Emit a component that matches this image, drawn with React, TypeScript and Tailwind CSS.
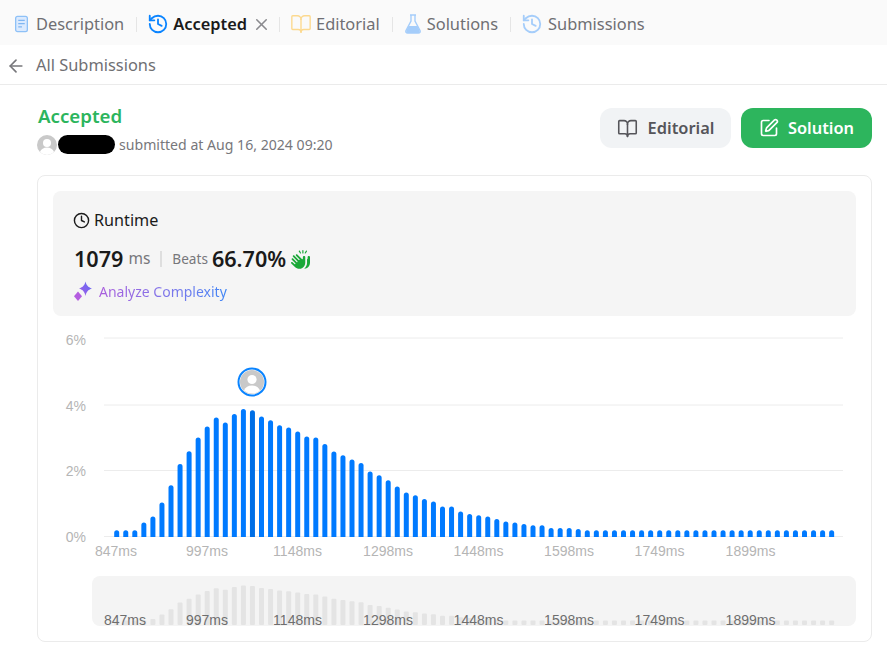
import React from "react";
import { ArrowLeft, BookOpen, Clock, History, SquarePen, X } from "lucide-react";
import { FaHandsClapping } from "react-icons/fa6";

const ui = "font-['Noto_Sans','Open_Sans',sans-serif]";

const head = [6,6,6,13.7,19.7,33.7,51,72.3,85,98.7,109.7,118.7,113.7,122.3,127.3,126,119.7,116,111,108.7,104.7,99.7,98.7,92.3,84.7,81,76.7,73.3,64.7,61,56,49.7,43.7,41,37.3,34.7,29.7,29.7,24.7,22.3,21,19.7,17.3,14.7,13.7,12.3,11,11,8.3,8.3,8.3,7.3];
const bars = [...head, ...Array(80 - head.length).fill(6)];
const labels = [["847ms",116],["997ms",207],["1148ms",297.5],["1298ms",388],["1448ms",478.5],["1598ms",569],["1749ms",659.5],["1899ms",750.5]] as const;

function Sep({ left = "ml-[12px]" }: { left?: string }) {
  return <span className={`${left} mr-[10px] h-[15px] w-px bg-[#e5e5e5]`} />;
}

function Avatar({ size }: { size: number }) {
  return (
    <svg width={size} height={size} viewBox="0 0 24 24" className="shrink-0">
      <circle cx="12" cy="12" r="12" fill="#c9c9c9" />
      <circle cx="12" cy="9.5" r="4.8" fill="#fff" />
      <path d="M3.5 20.5c1.4-3.6 4.6-5.4 8.5-5.4s7.100 1.800 8.500 5.400A12 12 0 0 1 12 24a12 12 0 0 1-8.500-3.500z" fill="#fff" />
    </svg>
  );
}

export default function App() {
  return (
    <div className={`${ui} h-[658px] w-[887px] overflow-hidden bg-white`}>
      <div className="flex h-[45px] items-center bg-[#fafafa] pt-[3px] pl-[15px] text-[16.4px] text-[#6f6f73]">
        <svg width="13" height="18" viewBox="0 0 14 18" className="mr-[8px]">
          <rect x="0.7" y="0.7" width="12.6" height="16.6" rx="2" fill="#dbeafe" stroke="#8ec1f7" strokeWidth="1.4" />
          <path d="M3.5 5h7M3.500 8.500h7M3.500 12h4" stroke="#7fb6f2" strokeWidth="1.3" />
        </svg>
        <span>Description</span>
        <Sep />
        <History size={22} strokeWidth={2} className="mr-[4px] text-[#0a84ff]" />
        <span className="font-semibold text-[#1a1a1a]">Accepted</span>
        <X size={19} className="ml-[5px] text-[#8a8a8e]" />
        <Sep left="ml-[8px]" />
        <BookOpen size={22} strokeWidth={1.5} className="mr-[4px] text-[#fcd98f]" />
        <span>Editorial</span>
        <Sep />
        <svg width="16" height="20" viewBox="0 0 16 20" className="mr-[6px] ml-[2px]">
          <path d="M5 1h6M6 1v6L1 16.500C.4 18 1.300 19 2.600 19h10.800c1.300 0 2.200-1 1.600-2.500L10 7V1" fill="none" stroke="#a5cdfa" strokeWidth="1.4" />
          <path d="M3.600 12h8.800l2.200 4.600c.5 1.200-.2 2.400-1.400 2.400H2.800c-1.200 0-1.900-1.200-1.400-2.400z" fill="#a5cdfa" />
        </svg>
        <span>Solutions</span>
        <Sep />
        <History size={22} strokeWidth={2} className="mr-[5px] text-[#a5cdfa]" />
        <span>Submissions</span>
      </div>

      <div className="flex h-[40px] items-center border-b border-[#ebebeb] pt-[2px] pl-[6px] text-[16.4px] text-[#6f6f73]">
        <ArrowLeft size={20} className="mr-[10px] text-[#77777b]" />
        <span>All Submissions</span>
      </div>

      <div className="px-[15px] pl-[37px]">
        <div className="flex h-[90px] items-start justify-between pt-[23px]">
          <div className="-mt-px">
            <div className="ml-px text-[18.7px] leading-[18px] font-semibold text-[#2cb55d]">Accepted</div>
            <div className="mt-[10px] flex h-[20px] items-center text-[14.1px] text-[#77777b]">
              <Avatar size={20} />
              <span className="mr-[4px] ml-px mb-[2px] h-[19px] w-[57px] rounded-full bg-black" />
              <span>submitted at Aug 16, 2024 09:20</span>
            </div>
          </div>
          <div className="flex gap-[10px] text-[16.4px] font-semibold">
            <button className="flex h-[40px] w-[131px] items-center justify-center gap-[10px] rounded-xl bg-[#f1f3f5] text-[#55555a]">
              <BookOpen size={21} strokeWidth={1.8} />
              Editorial
            </button>
            <button className="flex h-[40px] w-[131px] items-center justify-center gap-[9px] rounded-xl bg-[#2db55d] text-white">
              <SquarePen size={20} strokeWidth={2} />
              Solution
            </button>
          </div>
        </div>

        <div className="h-[467px] rounded-lg border border-[#ebebeb] p-[15px]">
          <div className="h-[125px] rounded-lg bg-[#f5f5f5] px-[20px] pt-[18px]">
            <div className="flex h-[22px] items-center gap-[4px] text-[16.2px] text-[#1a1a1a]">
              <Clock size={17} strokeWidth={2} />
              Runtime
            </div>
            <div className="mt-[13px] flex h-[30px] items-center pl-px">
              <span className="text-[21.6px] font-semibold text-[#1a1a1a]">1079</span>
              <span className="ml-[5px] text-[15.5px] text-[#77777b]">ms</span>
              <span className="mr-[10px] ml-[10px] h-[16px] w-[2px] bg-[#dedede]" />
              <span className="text-[13.6px] text-[#77777b]">Beats</span>
              <span className="ml-[4px] text-[21.6px] font-semibold text-[#1a1a1a]">66.70%</span>
              <FaHandsClapping size={19} className="ml-[5px] text-[#1aa838]" />
            </div>
            <div className="mt-[7px] flex h-[20px] items-center gap-[6px] text-[14px]">
              <svg width="20" height="20" viewBox="0 0 20 20">
                <defs>
                  <linearGradient id="sp" x1="0" y1="1" x2="1" y2="0">
                    <stop offset="0" stopColor="#a65de6" />
                    <stop offset="1" stopColor="#5f6cf5" />
                  </linearGradient>
                </defs>
                <path d="M12.500 .5c.9 3.600 2.400 5.700 6.500 7-4.100 1.300-5.600 3.400-6.500 7.500-.9-4.100-2.400-6.200-6.500-7.500 4.100-1.300 5.600-3.400 6.500-7z" fill="url(#sp)" />
                <path d="M5 10.500l4 4.700-4 4.700-4-4.700z" fill="#b45de0" />
              </svg>
              <span className="bg-gradient-to-r from-[#a95ddc] to-[#3d86f6] bg-clip-text text-transparent">Analyze Complexity</span>
            </div>
          </div>

          <svg width="803" height="245" viewBox="53 331 803 245" className="mt-[15px] block font-['Liberation_Sans',sans-serif] text-[14px]">
            {[[338,"6%",345],[405,"4%",411],[470.500,"2%",476],[536.500,"0%",542]].map(([y, t, ty]) => (
              <g key={t as string}>
                <line x1="104" x2="843" y1={y as number} y2={y as number} stroke="#ececec" strokeWidth="1" />
                <text x="86" y={ty as number} textAnchor="end" fill="#b5b5b5">{t}</text>
              </g>
            ))}
            {bars.map((h, i) => (
              <path
                key={i}
                d={`M${114.2 + i * 9.05} 537v${-(h - 1.8)}a2.500 2.500 0 0 1 5 0v${h - 1.8}z`}
                fill={i === 15 ? "#006fe6" : "#007aff"}
              />
            ))}
            <circle cx="252" cy="382" r="13.500" fill="#fff" stroke="#0a84ff" strokeWidth="2" />
            <g transform="translate(239.500 369.500)">
              <circle cx="12.500" cy="12.500" r="12" fill="#c9c9c9" />
              <circle cx="12.500" cy="10" r="4.600" fill="#fff" />
              <path d="M4.500 21c1.400-3.400 4.300-5 8-5s6.600 1.600 8 5a12 12 0 0 1-16 0z" fill="#fff" />
            </g>
            {labels.map(([t, x]) => (
              <text key={t} x={x} y="556" textAnchor="middle" fill="#b5b5b5">{t}</text>
            ))}
          </svg>

          <div className="ml-[39px] h-[50px] w-[764px] rounded-lg bg-[#f4f4f4]">
            <svg width="764" height="50" viewBox="92 576 764 50" className="block overflow-visible font-['Liberation_Sans',sans-serif] text-[14px]">
              {bars.map((h, i) => {
                const bh = Math.max(h * 0.31, 4.500);
                return <rect key={i} x={114.2 + i * 9.05} y={625 - bh} width="5" height={bh} rx="1" fill="#e4e4e4" />;
              })}
              {labels.map(([t, x], i) => (
                <text key={t} x={i === 0 ? x + 9 : x} y="625" textAnchor="middle" fill="#6e6e6e">{t}</text>
              ))}
            </svg>
          </div>
        </div>
      </div>
    </div>
  );
}
